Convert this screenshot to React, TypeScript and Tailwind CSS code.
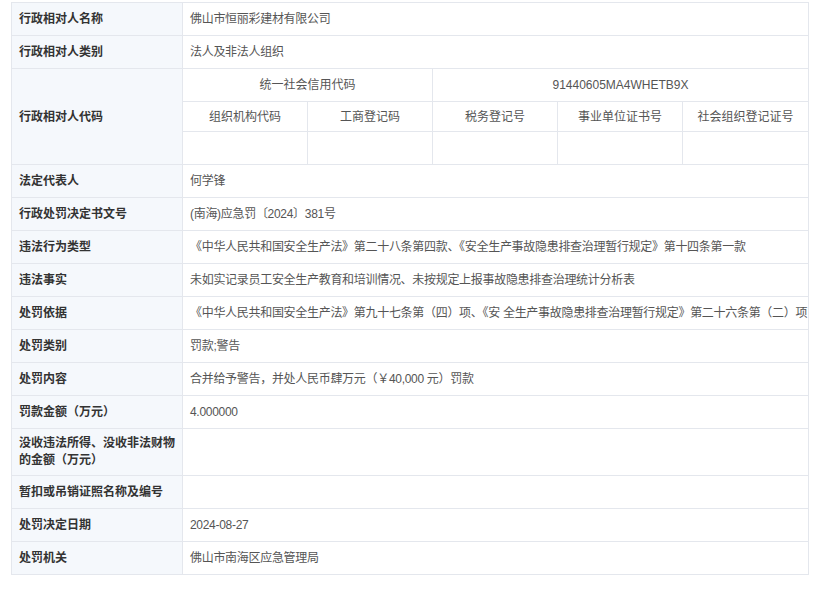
import React from 'react';

const rows: [string, string][] = [
  ['法定代表人', '何学锋'],
  ['行政处罚决定书文号', '(南海)应急罚〔2024〕381号'],
  ['违法行为类型', '《中华人民共和国安全生产法》第二十八条第四款、《安全生产事故隐患排查治理暂行规定》第十四条第一款'],
  ['违法事实', '未如实记录员工安全生产教育和培训情况、未按规定上报事故隐患排查治理统计分析表'],
  ['处罚依据', '《中华人民共和国安全生产法》第九十七条第（四）项、《安 全生产事故隐患排查治理暂行规定》第二十六条第（二）项'],
  ['处罚类别', '罚款;警告'],
  ['处罚内容', '合并给予警告，并处人民币肆万元（￥40,000 元）罚款'],
  ['罚款金额（万元）', '4.000000'],
  ['没收违法所得、没收非法财物的金额（万元）', ''],
  ['暂扣或吊销证照名称及编号', ''],
  ['处罚决定日期', '2024-08-27'],
  ['处罚机关', '佛山市南海区应急管理局'],
];

const lbl = 'border border-[#e4e7ed] bg-[#f5f8fc] px-[7px] text-left font-bold text-[#333] align-middle';
const val = 'border border-[#e4e7ed] px-[7px] text-[#555] align-middle whitespace-nowrap overflow-hidden tracking-[-0.3px]';
const sub = 'border border-[#e4e7ed] text-center text-[#555] align-middle whitespace-nowrap';

export default function App() {
  return (
    <div className="bg-white w-[830px] h-[591px] pt-[2px] pl-[11px]" style={{ fontFamily: '"Liberation Sans", "Noto Sans CJK SC", sans-serif' }}>
      <table className="border-collapse table-fixed w-[797px] text-[12px]">
        <colgroup>
          <col className="w-[171px]" />
          <col className="w-[125px]" />
          <col className="w-[125px]" />
          <col className="w-[125px]" />
          <col className="w-[125px]" />
          <col className="w-[126px]" />
        </colgroup>
        <tbody>
          <tr className="h-[33px]">
            <td className={lbl}>行政相对人名称</td>
            <td className={val} colSpan={5}>佛山市恒丽彩建材有限公司</td>
          </tr>
          <tr className="h-[33px]">
            <td className={lbl}>行政相对人类别</td>
            <td className={val} colSpan={5}>法人及非法人组织</td>
          </tr>
          <tr className="h-[33px]">
            <td className={lbl} rowSpan={3}>行政相对人代码</td>
            <td className={sub} colSpan={2}>统一社会信用代码</td>
            <td className={sub} colSpan={3}>91440605MA4WHETB9X</td>
          </tr>
          <tr className="h-[30px]">
            <td className={sub}>组织机构代码</td>
            <td className={sub}>工商登记码</td>
            <td className={sub}>税务登记号</td>
            <td className={sub}>事业单位证书号</td>
            <td className={sub}>社会组织登记证号</td>
          </tr>
          <tr className="h-[33px]">
            <td className={sub}></td>
            <td className={sub}></td>
            <td className={sub}></td>
            <td className={sub}></td>
            <td className={sub}></td>
          </tr>
          {rows.map(([k, v]) => (
            <tr key={k} className={k.startsWith('没收') ? 'h-[47px]' : 'h-[33px]'}>
              <td className={`${lbl} leading-[17px]`}>{k}</td>
              <td className={val} colSpan={5}>{v}</td>
            </tr>
          ))}
        </tbody>
      </table>
    </div>
  );
}
